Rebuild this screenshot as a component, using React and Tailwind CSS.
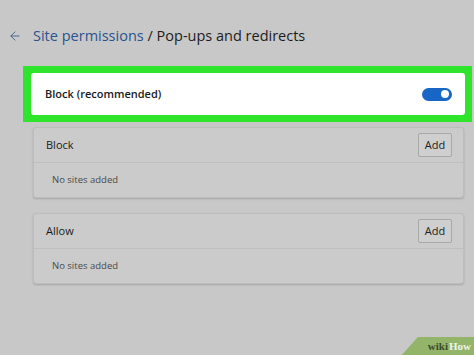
import { ArrowLeft } from "lucide-react";

function SiteList({ title }) {
  return (
    <div className="mx-[33px] w-[431px] rounded-[3px] border border-[#bdbdbd] bg-[#cbcbcb] shadow-[0_1px_2px_rgba(0,0,0,0.18)]">
      <div className="flex h-[35px] items-center justify-between border-b border-[#bfbfbf] pl-[12px] pr-[11px]">
        <span className="text-[11px] text-[#1a1a1a]">{title}</span>
        <button className="flex h-[24px] w-[34px] items-center justify-center rounded-[2px] border border-[#a8a8a8] bg-[#cfcfcf] text-[11px] text-[#222]">
          Add
        </button>
      </div>
      <div className="flex h-[34px] items-center pl-[18px] text-[9.5px] text-[#4a4a4a]">
        No sites added
      </div>
    </div>
  );
}

export default function App() {
  return (
    <div
      className="relative h-[355px] w-[474px] overflow-hidden bg-[#c8c8c8]"
      style={{ fontFamily: '"Open Sans", "Noto Sans", sans-serif' }}
    >
      {/* Titre */}
      <div className="flex h-[66px] items-start pt-[25px]">
        <ArrowLeft className="ml-[8px] mt-[4px] h-[14px] w-[14px] text-[#3d5a8a]" strokeWidth={1.5} />
        <h1 className="ml-[11px] text-[14.5px] font-medium leading-[22px] text-[#1c1c1c]">
          <span className="text-[#28548f]">Site permissions</span> / Pop-ups and redirects
        </h1>
      </div>

      {/* Bloc recommandé */}
      <div className="ml-[23px] w-[449px] bg-[#2ee52b] p-[7px] pl-[8px]">
        <div className="flex h-[42px] items-center justify-between rounded-[3px] bg-white pl-[14px] pr-[13px]">
          <span className="text-[11px] font-semibold text-[#1a1a1a]">Block (recommended)</span>
          <div className="flex h-[13px] w-[30px] items-center justify-end rounded-full bg-[#1766c6] pr-[3px]">
            <div className="h-[8px] w-[8px] rounded-full bg-white" />
          </div>
        </div>
      </div>

      <div className="mt-[5px] flex flex-col gap-[15px]">
        <SiteList title="Block" />
        <SiteList title="Allow" />
      </div>

      {/* wikiHow */}
      <div className="absolute bottom-0 right-0 flex h-[18px] items-center pl-[26px] pr-[3px] [clip-path:polygon(16px_0,100%_0,100%_100%,0_100%)] bg-[#93b56a]">
        <span className="text-[11px] font-bold leading-none text-[#3c4b2a]" style={{ fontFamily: '"Liberation Serif", serif' }}>
          wiki
        </span>
        <span className="ml-[1px] text-[11px] font-bold leading-none text-[#eef3e6]" style={{ fontFamily: '"Liberation Serif", serif' }}>
          How
        </span>
      </div>
    </div>
  );
}
